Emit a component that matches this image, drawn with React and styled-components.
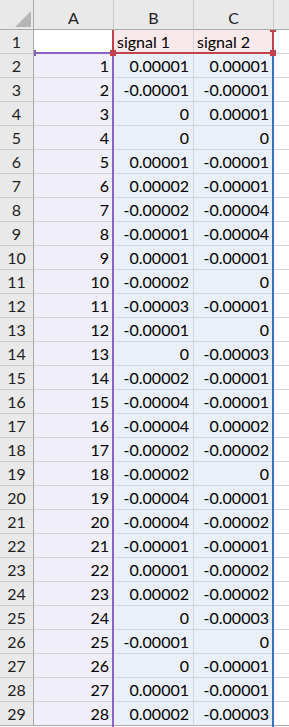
import React from "react";
import styled, { createGlobalStyle } from "styled-components";

const GlobalStyle = createGlobalStyle`
  html, body {
    margin: 0;
    padding: 0;
    background: #ffffff;
    overflow: hidden;
  }
  body {
    font-family: Lato, "Liberation Sans", sans-serif;
  }
`;

const COLS = "34px 80px 80px 80px 1fr";
const ROW_H = 24;
const COL_X = [-1, 79, 159, 239];

const data = [
  ["0.00001", "0.00001"],
  ["-0.00001", "-0.00001"],
  ["0", "0.00001"],
  ["0", "0"],
  ["0.00001", "-0.00001"],
  ["0.00002", "-0.00001"],
  ["-0.00002", "-0.00004"],
  ["-0.00001", "-0.00004"],
  ["0.00001", "-0.00001"],
  ["-0.00002", "0"],
  ["-0.00003", "-0.00001"],
  ["-0.00001", "0"],
  ["0", "-0.00003"],
  ["-0.00002", "-0.00001"],
  ["-0.00004", "-0.00001"],
  ["-0.00004", "0.00002"],
  ["-0.00002", "-0.00002"],
  ["-0.00002", "0"],
  ["-0.00004", "-0.00001"],
  ["-0.00004", "-0.00002"],
  ["-0.00001", "-0.00001"],
  ["0.00001", "-0.00002"],
  ["0.00002", "-0.00002"],
  ["0", "-0.00003"],
  ["-0.00001", "0"],
  ["0", "-0.00001"],
  ["0.00001", "-0.00001"],
  ["0.00002", "-0.00003"],
];

const Sheet = styled.div`
  position: relative;
  width: 289px;
  height: 727px;
  overflow: hidden;
  background: #ffffff;
  font-size: 16px;
  color: #000;
`;

const HeaderRow = styled.div`
  display: grid;
  grid-template-columns: ${COLS};
  height: 30px;
`;

const Corner = styled.div`
  box-sizing: border-box;
  background: #e9e9e9;
  border-right: 1px solid #a9a9a9;
  border-bottom: 1px solid #a9a9a9;
  display: flex;
  align-items: flex-end;
  justify-content: flex-end;
  padding: 0 2px 2px 0;
`;

const ColHeader = styled.div`
  box-sizing: border-box;
  background: #e9e9e9;
  border-bottom: 1px solid #a9a9a9;
  border-right: ${(p) => (p.$last ? "none" : "1px solid #c9c9c9")};
  color: #1f1f1f;
  text-align: center;
  line-height: 23px;
  padding-top: 6px;
`;

const Row = styled.div`
  display: grid;
  grid-template-columns: ${COLS};
  height: ${ROW_H}px;
`;

const RowHeader = styled.div`
  box-sizing: border-box;
  background: #e9e9e9;
  border-right: 1px solid #a9a9a9;
  border-bottom: 1px solid ${(p) => (p.$bottom ? "#a9a9a9" : "#c9c9c9")};
  color: #1f1f1f;
  text-align: center;
  line-height: 23px;
`;

const fills = {
  white: "#ffffff",
  category: "#f0eef8",
  values: "#e9f0fa",
  names: "#fae9ea",
};

const Cell = styled.div`
  box-sizing: border-box;
  background: ${(p) => fills[p.$fill]};
  border-right: ${(p) => (p.$last ? "none" : "1px solid #d4d4d4")};
  border-bottom: 1px solid ${(p) => (p.$bottom ? "#a9a9a9" : "#d4d4d4")};
  text-align: ${(p) => p.$align};
  padding: 0 4px 0 3px;
  line-height: 23px;
  white-space: nowrap;
  overflow: hidden;
`;

const FooterLine = styled.div`
  height: 2px;
  background: #ffffff;
`;

const OverlayArea = styled.div`
  position: absolute;
  left: 34px;
  top: 30px;
  right: 0;
  bottom: 0;
  overflow: hidden;
  pointer-events: none;
`;

const RangeBox = styled.div`
  position: absolute;
  box-sizing: border-box;
  left: ${(p) => p.$x1 - 1}px;
  top: ${(p) => p.$y1 - 1}px;
  width: ${(p) => p.$x2 - p.$x1 + 2}px;
  height: ${(p) => p.$y2 - p.$y1 + 2}px;
  border: 2px solid ${(p) => p.$color};
`;

const Handle = styled.div`
  position: absolute;
  left: ${(p) => p.$x - 3}px;
  top: ${(p) => p.$y - 3}px;
  width: 6px;
  height: 6px;
  background: ${(p) => p.$color};
`;

const RED = "#c4404d";
const PURPLE = "#8a63c2";
const BLUE = "#3f6cc4";

function Range({ c1, r1, c2, r2, color, handles }) {
  const x1 = COL_X[c1];
  const x2 = COL_X[c2];
  const y1 = r1 * ROW_H - 1;
  const y2 = r2 * ROW_H - 1;
  const pts = { tl: [x1, y1], tr: [x2, y1], bl: [x1, y2], br: [x2, y2] };
  return (
    <>
      <RangeBox $x1={x1} $y1={y1} $x2={x2} $y2={y2} $color={color} />
      {handles.map((h) => (
        <Handle key={h} $x={pts[h][0]} $y={pts[h][1]} $color={color} />
      ))}
    </>
  );
}

function CornerTriangle() {
  return (
    <svg width="16" height="16" viewBox="0 0 16 16">
      <polygon points="0,16 16,16 16,0" fill="#b5b5b5" />
    </svg>
  );
}

export default function App() {
  return (
    <>
      <GlobalStyle />
      <Sheet>
        <HeaderRow>
          <Corner>
            <CornerTriangle />
          </Corner>
          <ColHeader>A</ColHeader>
          <ColHeader>B</ColHeader>
          <ColHeader>C</ColHeader>
          <ColHeader $last />
        </HeaderRow>

        <Row>
          <RowHeader>1</RowHeader>
          <Cell $fill="white" $align="right" />
          <Cell $fill="names" $align="left">signal 1</Cell>
          <Cell $fill="names" $align="left">signal 2</Cell>
          <Cell $fill="white" $align="left" $last />
        </Row>

        {data.map((vals, i) => {
          const bottom = i === data.length - 1;
          return (
            <Row key={i}>
              <RowHeader $bottom={bottom}>{i + 2}</RowHeader>
              <Cell $fill="category" $align="right" $bottom={bottom}>
                {i + 1}
              </Cell>
              <Cell $fill="values" $align="right" $bottom={bottom}>
                {vals[0]}
              </Cell>
              <Cell $fill="values" $align="right" $bottom={bottom}>
                {vals[1]}
              </Cell>
              <Cell $fill="white" $align="left" $last $bottom={bottom} />
            </Row>
          );
        })}

        <FooterLine />

        <OverlayArea>
          <Range c1={1} r1={1} c2={3} r2={40} color={BLUE} handles={[]} />
          <Range c1={0} r1={1} c2={1} r2={40} color={PURPLE} handles={["tl"]} />
          <Range c1={1} r1={0} c2={3} r2={1} color={RED} handles={["tr", "bl", "br"]} />
        </OverlayArea>
      </Sheet>
    </>
  );
}
